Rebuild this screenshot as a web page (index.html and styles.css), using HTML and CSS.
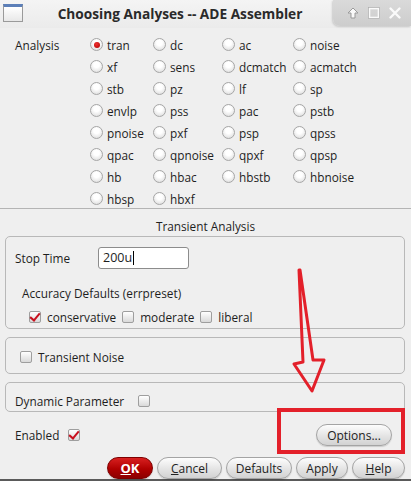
FILE: index.html
```html
<!DOCTYPE html>
<html lang="en">
<head>
  <meta charset="UTF-8" />
  <title>Choosing Analyses -- ADE Assembler</title>
  <meta name="viewport" content="width=device-width, initial-scale=1.0" />
  <link rel="stylesheet" href="styles.css">
</head>
<body>
  <div class="window">
    <header class="titlebar">
      <span class="app-icon"></span>
      <h1 class="title">Choosing Analyses -- ADE Assembler</h1>
      <div class="win-controls">
        <svg width="14" height="14" viewBox="0 0 14 14"><path d="M7 2 L12 7 L9 7 L9 12 L5 12 L5 7 L2 7 Z" fill="#fafafa" stroke="#9a9a9a" stroke-width="1"/></svg>
        <svg width="14" height="14" viewBox="0 0 14 14"><rect x="2.5" y="2.5" width="9" height="9" fill="none" stroke="#fafafa" stroke-width="1.6"/><rect x="1.5" y="1.5" width="11" height="11" fill="none" stroke="#a8a8a8" stroke-width="0.6"/></svg>
        <svg width="14" height="14" viewBox="0 0 14 14"><path d="M2.5 2.5 L11.5 11.5 M11.5 2.5 L2.5 11.5" stroke="#fafafa" stroke-width="2.4" stroke-linecap="round"/></svg>
      </div>
    </header>

    <section class="analysis">
      <div class="analysis-label">Analysis</div>
      <div class="radio-grid" id="radio-grid"></div>
    </section>

    <div class="section-title">Transient Analysis</div>

    <div class="group group-main">
      <div class="stop-row">
        <span class="stop-label">Stop Time</span>
        <div class="text-input">200u<span class="caret"></span></div>
      </div>
      <div class="accuracy-label">Accuracy Defaults (errpreset)</div>
      <div class="check-row">
        <label class="check"><span class="box checked"></span>conservative</label>
        <label class="check"><span class="box"></span>moderate</label>
        <label class="check"><span class="box"></span>liberal</label>
      </div>
    </div>

    <div class="group group-noise">
      <label class="check"><span class="box"></span>Transient Noise</label>
    </div>

    <div class="group group-dynamic">
      <span class="dyn-label">Dynamic Parameter</span>
      <span class="box"></span>
    </div>

    <div class="enabled-row">
      <span class="enabled-label">Enabled</span>
      <span class="box checked"></span>
      <button class="btn btn-options">Options...</button>
    </div>

    <div class="button-row">
      <button class="btn btn-ok"><u>O</u>K</button>
      <button class="btn btn-cancel"><u>C</u>ancel</button>
      <button class="btn btn-defaults">Defaults</button>
      <button class="btn btn-apply">Apply</button>
      <button class="btn btn-help"><u>H</u>elp</button>
    </div>

    <!-- annotation drawn over the dialog -->
    <div class="highlight-box"></div>
    <svg class="arrow" width="411" height="481" viewBox="0 0 411 481">
      <path d="M299 270 L303 362 L294 364 L312 391 L324 360 L313 360 L300 270 Z" fill="none" stroke="#e3202a" stroke-width="3" stroke-linejoin="round"/>
    </svg>
  </div>

  <script>
    const analyses = [
      'tran', 'dc', 'ac', 'noise',
      'xf', 'sens', 'dcmatch', 'acmatch',
      'stb', 'pz', 'lf', 'sp',
      'envlp', 'pss', 'pac', 'pstb',
      'pnoise', 'pxf', 'psp', 'qpss',
      'qpac', 'qpnoise', 'qpxf', 'qpsp',
      'hb', 'hbac', 'hbstb', 'hbnoise',
      'hbsp', 'hbxf'
    ];

    const grid = document.getElementById('radio-grid');
    analyses.forEach((name) => {
      const item = document.createElement('label');
      item.className = 'radio-item';
      const dot = document.createElement('span');
      dot.className = name === 'tran' ? 'radio selected' : 'radio';
      item.appendChild(dot);
      item.appendChild(document.createTextNode(name));
      grid.appendChild(item);
    });
  </script>
</body>
</html>
```

FILE: styles.css
```css
* {
  box-sizing: border-box;
}

html, body {
  margin: 0;
  padding: 0;
  width: 100%;
  height: 100%;
  overflow: hidden;
  background: #efefef;
  font-family: 'Open Sans', 'Noto Sans', sans-serif;
  font-size: 11.8px;
  color: #1e1e1e;
}

.window {
  position: relative;
  width: 411px;
  height: 481px;
  display: flex;
  flex-direction: column;
  border-bottom: 2px solid #5a5a5a;
}

/* title bar */
.titlebar {
  height: 28px;
  display: flex;
  align-items: flex-start;
  background: linear-gradient(#f4f4f4, #ebebeb);
}

.app-icon {
  width: 20px;
  height: 18px;
  margin: 4px 0 0 3px;
  border: 1px solid #9a9a9a;
  border-top: 3px solid #5c7fb8;
  background: linear-gradient(#ffffff, #e8e8e8);
}

.title {
  flex: 1;
  margin: 0;
  padding-top: 4px;
  text-align: center;
  font-size: 13.7px;
  font-weight: 700;
  color: #2a2a2a;
  padding-left: 4px;
}

.win-controls {
  width: 78px;
  height: 26px;
  display: flex;
  align-items: center;
  justify-content: space-around;
  padding: 0 6px 0 10px;
  background: linear-gradient(#dadada, #cdcdcd);
  border-bottom-left-radius: 7px;
  box-shadow: -1px 1px 2px rgba(0, 0, 0, 0.15);
}

/* analysis radio grid */
.analysis {
  display: flex;
  padding: 6px 0 0 15px;
  height: 181px;
  border-bottom: 1px solid #b4b4b4;
}

.analysis-label {
  width: 75px;
  line-height: 22px;
}

.radio-grid {
  display: grid;
  grid-template-columns: 63px 69px 71px 80px;
  grid-auto-rows: 22px;
}

.radio-item {
  display: flex;
  align-items: center;
  gap: 4px;
}

.radio {
  width: 13px;
  height: 13px;
  border-radius: 50%;
  border: 1px solid #a6a6a6;
  background: radial-gradient(circle at 50% 35%, #ffffff 30%, #d6d6d6 100%);
  display: flex;
  align-items: center;
  justify-content: center;
}

.radio.selected::after {
  content: '';
  width: 6px;
  height: 6px;
  border-radius: 50%;
  background: radial-gradient(circle at 40% 35%, #f03030, #b00000);
}

.section-title {
  height: 27px;
  line-height: 18px;
  padding-top: 8px;
  text-align: center;
}

/* group boxes */
.group {
  margin: 0 6px 0 5px;
  border: 1px solid #b8b8b8;
  border-radius: 5px;
}

.group-main {
  height: 94px;
  padding: 10px 10px 0 9px;
}

.stop-row {
  display: flex;
  align-items: center;
  height: 22px;
}

.stop-label {
  width: 83px;
}

.text-input {
  width: 91px;
  height: 22px;
  padding: 0 4px;
  line-height: 20px;
  background: #fff;
  border: 1px solid #8c8c8c;
  border-radius: 3px;
  font-size: 12.5px;
}

.caret {
  display: inline-block;
  width: 1px;
  height: 14px;
  margin-left: 1px;
  vertical-align: -3px;
  background: #000;
}

.accuracy-label {
  margin: 16px 0 0 7px;
  line-height: 16px;
}

.check-row {
  display: flex;
  gap: 6px;
  margin: 8px 0 0 14px;
}

.check {
  display: flex;
  align-items: center;
  gap: 6px;
  line-height: 16px;
}

.box {
  position: relative;
  display: inline-block;
  width: 12px;
  height: 12px;
  border: 1px solid #9e9e9e;
  border-radius: 2px;
  background: linear-gradient(#ffffff, #d9d9d9);
}

.box.checked::after {
  content: '';
  position: absolute;
  left: 2px;
  top: -1px;
  width: 4px;
  height: 8px;
  border-right: 2.5px solid #c8101e;
  border-bottom: 2.5px solid #c8101e;
  transform: rotate(40deg);
}

.group-noise {
  margin-top: 8px;
  height: 37px;
  display: flex;
  align-items: center;
  padding: 4px 0 0 14px;
}

.group-dynamic {
  margin-top: 8px;
  height: 31px;
  display: flex;
  align-items: center;
  padding: 8px 0 0 9px;
}

.dyn-label {
  width: 123px;
}

.enabled-row {
  height: 44px;
  display: flex;
  align-items: center;
  padding: 2px 0 0 15px;
}

.enabled-label {
  width: 53px;
}

/* buttons */
.btn {
  height: 22px;
  padding: 0;
  font-family: inherit;
  font-size: 12px;
  color: #222;
  border: 1px solid #a4a4a4;
  border-radius: 11px;
  background: linear-gradient(#fdfdfd, #e4e4e4 55%, #d2d2d2);
  box-shadow: 0 1px 1px rgba(0, 0, 0, 0.15);
}

.btn u {
  text-decoration-thickness: 1px;
}

.btn-options {
  width: 76px;
  margin-left: 236px;
}

.button-row {
  display: flex;
  gap: 4px;
  padding: 1px 0 0 107px;
}

.btn-ok {
  width: 46px;
  color: #fff;
  font-weight: 700;
  font-size: 13px;
  border-color: #7e0000;
  background: linear-gradient(#d82020, #b00000 55%, #8c0000);
}

.btn-cancel {
  width: 65px;
}

.btn-defaults {
  width: 66px;
}

.btn-apply {
  width: 52px;
}

.btn-help {
  width: 53px;
}

/* annotation overlay */
.highlight-box {
  position: absolute;
  left: 277px;
  top: 408px;
  width: 128px;
  height: 46px;
  border: 4px solid #e3202a;
  pointer-events: none;
}

.arrow {
  position: absolute;
  left: 0;
  top: 0;
  pointer-events: none;
}
```
